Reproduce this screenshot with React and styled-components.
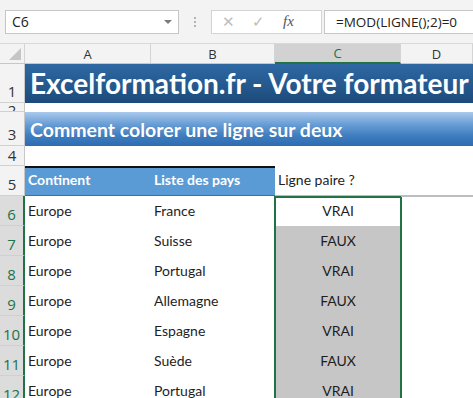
import styled, { createGlobalStyle } from "styled-components";

const GlobalStyle = createGlobalStyle`
  html, body {
    margin: 0;
    padding: 0;
    background: #ffffff;
    overflow: hidden;
  }
  body {
    font-family: Lato, "Liberation Sans", sans-serif;
  }
`;

const COLS = "25px 126px 124px 126px 1fr";
const GREEN = "#217346";

const Page = styled.div`
  width: 473px;
  height: 398px;
  overflow: hidden;
  background: #fff;
`;

// formula bar
const Toolbar = styled.div`
  height: 43px;
  background: #f3f3f3;
  display: flex;
  align-items: center;
  padding: 0 0 0 5px;
  border-bottom: 1px solid #d9d9d9;
`;

const NameBox = styled.div`
  width: 174px;
  height: 24px;
  background: #fff;
  border: 1px solid #c6c6c6;
  display: flex;
  align-items: center;
  justify-content: space-between;
  padding: 0 6px 0 6px;
  box-sizing: border-box;
  font-family: "Open Sans", sans-serif;
  font-size: 14px;
  color: #222;
`;

const Caret = styled.span`
  width: 0;
  height: 0;
  border-left: 4px solid transparent;
  border-right: 4px solid transparent;
  border-top: 4px solid #7a7a7a;
`;

const Grip = styled.div`
  width: 32px;
  display: flex;
  flex-direction: column;
  align-items: center;
  gap: 2px;
  > span {
    width: 2px;
    height: 2px;
    background: #b4b4b4;
  }
`;

const ActionBox = styled.div`
  width: 111px;
  height: 24px;
  background: #fff;
  border: 1px solid #d4d4d4;
  box-sizing: border-box;
  display: flex;
  align-items: center;
  padding-left: 10px;
  gap: 17px;
  color: #bdbdbd;
  font-size: 15px;
`;

const Fx = styled.span`
  font-family: "Liberation Serif", serif;
  font-style: italic;
  font-size: 15px;
  color: #555;
  margin-left: 1px;
`;

const FormulaBox = styled.div`
  flex: 1;
  height: 24px;
  margin-left: 2px;
  background: #fff;
  border: 1px solid #c6c6c6;
  border-right: none;
  box-sizing: border-box;
  display: flex;
  align-items: center;
  padding-left: 11px;
  font-family: "Open Sans", sans-serif;
  font-size: 13.5px;
  color: #222;
`;

// grid
const Row = styled.div`
  display: grid;
  grid-template-columns: ${COLS};
  height: ${(p) => p.h}px;
`;

const HeadRow = styled(Row)`
  background: #f3f3f3;
  border-bottom: 1px solid #c8c8c8;
  box-sizing: border-box;
`;

const Corner = styled.div`
  position: relative;
  border-right: 1px solid #d4d4d4;
  &::after {
    content: "";
    position: absolute;
    right: 3px;
    bottom: 3px;
    border-left: 12px solid transparent;
    border-bottom: 12px solid #c5c5c5;
  }
`;

const ColHead = styled.div`
  display: flex;
  align-items: center;
  justify-content: center;
  font-family: "Open Sans", sans-serif;
  font-size: 13px;
  color: ${(p) => (p.sel ? GREEN : "#333")};
  background: ${(p) => (p.sel ? "#d2d2d2" : "transparent")};
  border-right: 1px solid #d4d4d4;
  border-bottom: ${(p) => (p.sel ? `2px solid ${GREEN}` : "none")};
  margin-bottom: ${(p) => (p.sel ? "-1px" : "0")};
  box-sizing: border-box;
`;

const RowHead = styled.div`
  display: flex;
  align-items: ${(p) => (p.top ? "flex-start" : "flex-end")};
  justify-content: center;
  overflow: hidden;
  font-family: "Open Sans", sans-serif;
  font-size: 15px;
  line-height: 1;
  padding-bottom: ${(p) => (p.pb != null ? p.pb : 3)}px;
  box-sizing: border-box;
  background: ${(p) => (p.sel ? "#dcdcdc" : "#f3f3f3")};
  color: ${(p) => (p.sel ? GREEN : "#333")};
  border-bottom: 1px solid #d0d0d0;
  border-right: ${(p) => (p.sel ? `2px solid ${GREEN}` : "1px solid #c8c8c8")};
`;

const Banner = styled.div`
  grid-column: 2 / -1;
  display: flex;
  align-items: flex-end;
  white-space: nowrap;
  overflow: hidden;
  color: #fff;
  font-weight: 700;
  padding-left: 5px;
`;

const Title = styled(Banner)`
  background: linear-gradient(180deg, #2e68a3 0%, #24578c 60%, #1d4a7a 100%);
  font-size: 28px;
  line-height: 1;
  padding-bottom: 6px;
`;

const Subtitle = styled(Banner)`
  background: linear-gradient(180deg, #a9c9ec 0%, #6a9fd6 35%, #3f7dc0 70%, #2e6cb2 100%);
  font-size: 19.5px;
  padding-bottom: 5px;
  text-shadow: 0 0 1px rgba(0, 0, 0, 0.15);
`;

const Blank = styled.div`
  grid-column: 2 / -1;
`;

const Cell = styled.div`
  display: flex;
  align-items: flex-end;
  padding: 0 3px 7px 3px;
  box-sizing: border-box;
  white-space: nowrap;
  overflow: hidden;
  font-size: 14px;
  color: #1e1e1e;
`;

const HeaderCell = styled(Cell)`
  background: #5b9bd5;
  color: #fff;
  font-weight: 700;
  border-top: 2px solid #111;
  border-bottom: 1px solid #2f75b5;
`;

const PlainHeader = styled(Cell)`
  border-bottom: 1px solid #bdbdbd;
`;

const SelCell = styled(Cell)`
  background: ${(p) => (p.active ? "#fff" : "#c6c6c6")};
  border-left: 2px solid ${GREEN};
  border-right: 2px solid ${GREEN};
  border-top: ${(p) => (p.active ? `2px solid ${GREEN}` : "none")};
  margin-left: -1px;
  margin-right: -1px;
  background-clip: content-box;
  padding: 0;
  > span {
    width: 100%;
    text-align: center;
    padding-bottom: 7px;
  }
`;

const TopLine = styled.div`
  border-top: 1px solid #bdbdbd;
`;

const data = [
  ["Europe", "France", "VRAI"],
  ["Europe", "Suisse", "FAUX"],
  ["Europe", "Portugal", "VRAI"],
  ["Europe", "Allemagne", "FAUX"],
  ["Europe", "Espagne", "VRAI"],
  ["Europe", "Suède", "FAUX"],
  ["Europe", "Portugal", "VRAI"],
];

export default function App() {
  return (
    <Page>
      <GlobalStyle />
      <Toolbar>
        <NameBox>
          C6
          <Caret />
        </NameBox>
        <Grip>
          <span />
          <span />
          <span />
        </Grip>
        <ActionBox>
          <span>✕</span>
          <span>✓</span>
          <Fx>fx</Fx>
        </ActionBox>
        <FormulaBox>=MOD(LIGNE();2)=0</FormulaBox>
      </Toolbar>

      <HeadRow h={20}>
        <Corner />
        <ColHead>A</ColHead>
        <ColHead>B</ColHead>
        <ColHead sel>C</ColHead>
        <ColHead>D</ColHead>
      </HeadRow>

      <Row h={39}>
        <RowHead>1</RowHead>
        <Title>Excelformation.fr - Votre formateur en ligne</Title>
      </Row>
      <Row h={9}>
        <RowHead pb={0} top>2</RowHead>
        <Blank />
      </Row>
      <Row h={34}>
        <RowHead>3</RowHead>
        <Subtitle>Comment colorer une ligne sur deux</Subtitle>
      </Row>
      <Row h={20}>
        <RowHead pb={2}>4</RowHead>
        <Blank />
      </Row>
      <Row h={30}>
        <RowHead>5</RowHead>
        <HeaderCell>Continent</HeaderCell>
        <HeaderCell>Liste des pays</HeaderCell>
        <PlainHeader>Ligne paire ?</PlainHeader>
        <PlainHeader />
      </Row>
      {data.map(([a, b, c], i) => (
        <Row h={30} key={i}>
          <RowHead sel>{i + 6}</RowHead>
          <Cell>{a}</Cell>
          <Cell>{b}</Cell>
          <SelCell active={i === 0}>
            <span>{c}</span>
          </SelCell>
          {i === 0 ? <TopLine /> : <Cell />}
        </Row>
      ))}
    </Page>
  );
}
